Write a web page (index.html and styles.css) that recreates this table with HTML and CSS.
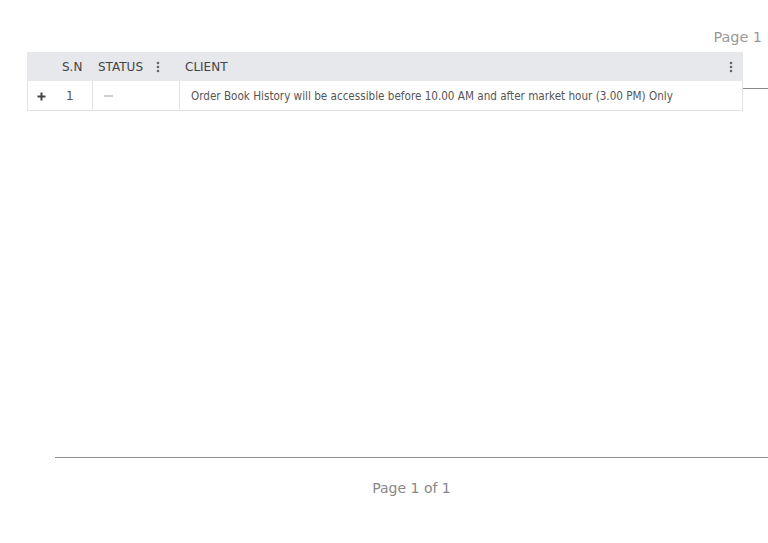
FILE: index.html
```html
<!DOCTYPE html>
<html>
<head>
<meta charset="utf-8">
<link rel="stylesheet" href="styles.css">
</head>
<body>
<div class="page">
  <div class="page-top">Page 1</div>
  <div class="grid-row">
    <div class="table">
      <div class="thead">
        <div class="cell exp"></div>
        <div class="cell sn">S.N</div>
        <div class="cell status">STATUS
          <svg class="dots" width="4" height="12" viewBox="0 0 4 12"><circle cx="2" cy="2" r="1.3"/><circle cx="2" cy="6" r="1.3"/><circle cx="2" cy="10" r="1.3"/></svg>
        </div>
        <div class="cell client">CLIENT
          <svg class="dots" width="4" height="12" viewBox="0 0 4 12"><circle cx="2" cy="2" r="1.3"/><circle cx="2" cy="6" r="1.3"/><circle cx="2" cy="10" r="1.3"/></svg>
        </div>
      </div>
      <div class="trow">
        <div class="cell exp"><svg class="plus" width="9" height="9" viewBox="0 0 9 9"><path d="M4.5 0.5V8.5M0.5 4.5H8.5"/></svg></div>
        <div class="cell sn num">1</div>
        <div class="cell status"><span class="dash"></span></div>
        <div class="cell client msg">Order Book History will be accessible before 10.00 AM and after market hour (3.00 PM) Only</div>
      </div>
    </div>
    <div class="side-line"></div>
  </div>
  <div class="footer">
    <div class="footer-text">Page 1 of 1</div>
  </div>
</div>
</body>
</html>
```

FILE: styles.css
```css
html, body {
  margin: 0;
  padding: 0;
  background: #ffffff;
  overflow: hidden;
}
body {
  font-family: "DejaVu Sans", sans-serif;
  color: #444;
}
.page {
  width: 768px;
  height: 543px;
  padding-top: 29px;
  box-sizing: border-box;
}
.page-top {
  height: 16px;
  line-height: 16px;
  font-size: 14.4px;
  color: #999;
  text-align: right;
  padding-right: 6px;
}
.grid-row {
  display: flex;
  margin-top: 7px;
  margin-left: 27px;
}
.table {
  width: 716px;
  flex: none;
}
.thead, .trow {
  display: grid;
  grid-template-columns: 28px 36px 87px 1fr;
}
.thead {
  height: 29px;
  background: #e6e8ec;
  font-size: 12px;
  color: #444;
}
.trow {
  height: 29px;
  border-left: 1px solid #e2e2e2;
  border-right: 1px solid #e2e2e2;
  border-bottom: 1px solid #e2e2e2;
  background: #fff;
}
.cell {
  display: flex;
  align-items: center;
}
.thead .sn {
  padding-left: 7px;
}
.thead .status {
  padding-left: 7px;
  justify-content: space-between;
  padding-right: 18px;
}
.thead .client {
  padding-left: 7px;
  justify-content: space-between;
  padding-right: 10px;
}
.dots {
  fill: #666;
  margin-top: 1px;
}
.trow .status {
  border-left: 1px solid #e2e2e2;
  padding-left: 11px;
}
.trow .client {
  border-left: 1px solid #e2e2e2;
}
.plus {
  stroke: #444;
  stroke-width: 2;
  margin-left: 9px;
  margin-top: 1px;
}
.num {
  font-size: 12px;
  color: #555;
  padding-left: 10px;
}
.dash {
  display: block;
  width: 9px;
  height: 2px;
  margin-top: 1px;
  background: #cfcfcf;
}
.msg {
  font-family: "DejaVu Sans Condensed", "DejaVu Sans", sans-serif;
  font-stretch: condensed;
  font-size: 11.6px;
  color: #555;
  padding-left: 11px;
}
.side-line {
  flex: 1;
  height: 1px;
  background: #8a8a8a;
  margin-top: 36px;
}
.footer {
  margin-top: 346px;
  margin-left: 55px;
  border-top: 1px solid #8f8f8f;
}
.footer-text {
  text-align: center;
  font-size: 14px;
  color: #888;
  margin-top: 22px;
  line-height: 16px;
}
```
